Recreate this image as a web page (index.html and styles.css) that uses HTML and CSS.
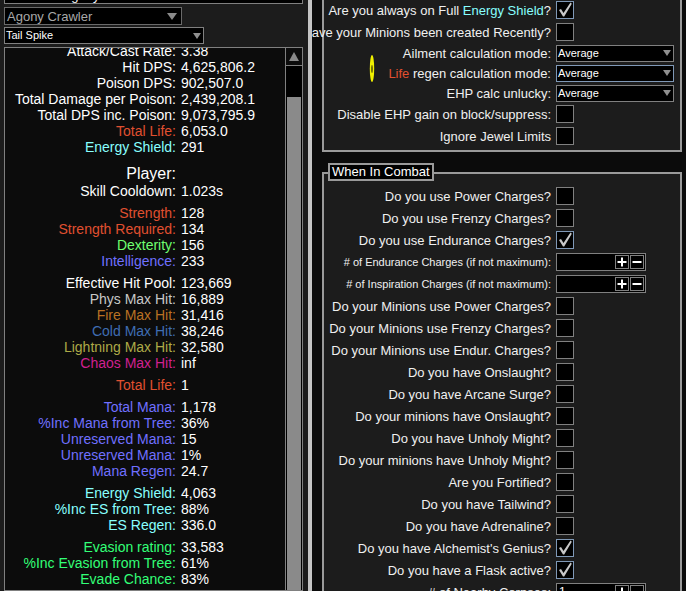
FILE: index.html
```html
<!DOCTYPE html>
<html>
<head>
<meta charset="utf-8">
<link rel="stylesheet" href="styles.css">
</head>
<body>
<div class="app">
  <aside class="left">
    <div class="dd dd-wide"><span class="dd-text">Herald of Agony</span><span class="arrow"></span></div>
    <div class="dd dd-minion"><span class="dd-text">Agony Crawler</span><span class="arrow"></span></div>
    <div class="dd dd-skill"><span class="dd-text small">Tail Spike</span><span class="arrow"></span></div>
    <div class="statbox">
      <div class="stats">
        <div class="stats-inner">
          <div class="stat"><span class="lbl">Attack/Cast Rate:</span><span class="val">3.38</span></div>
          <div class="stat"><span class="lbl">Hit DPS:</span><span class="val">4,625,806.2</span></div>
          <div class="stat"><span class="lbl">Poison DPS:</span><span class="val">902,507.0</span></div>
          <div class="stat"><span class="lbl">Total Damage per Poison:</span><span class="val">2,439,208.1</span></div>
          <div class="stat"><span class="lbl">Total DPS inc. Poison:</span><span class="val">9,073,795.9</span></div>
          <div class="stat"><span class="lbl c-life">Total Life:</span><span class="val">6,053.0</span></div>
          <div class="stat"><span class="lbl c-es">Energy Shield:</span><span class="val">291</span></div>

          <div class="stat head"><span class="lbl">Player:</span><span class="val"></span></div>
          <div class="stat"><span class="lbl">Skill Cooldown:</span><span class="val">1.023s</span></div>

          <div class="stat gap"><span class="lbl c-str">Strength:</span><span class="val">128</span></div>
          <div class="stat"><span class="lbl c-str">Strength Required:</span><span class="val">134</span></div>
          <div class="stat"><span class="lbl c-dex">Dexterity:</span><span class="val">156</span></div>
          <div class="stat"><span class="lbl c-int">Intelligence:</span><span class="val">233</span></div>

          <div class="stat gap"><span class="lbl">Effective Hit Pool:</span><span class="val">123,669</span></div>
          <div class="stat"><span class="lbl c-phys">Phys Max Hit:</span><span class="val">16,889</span></div>
          <div class="stat"><span class="lbl c-fire">Fire Max Hit:</span><span class="val">31,416</span></div>
          <div class="stat"><span class="lbl c-cold">Cold Max Hit:</span><span class="val">38,246</span></div>
          <div class="stat"><span class="lbl c-light">Lightning Max Hit:</span><span class="val">32,580</span></div>
          <div class="stat"><span class="lbl c-chaos">Chaos Max Hit:</span><span class="val">inf</span></div>

          <div class="stat gap"><span class="lbl c-life">Total Life:</span><span class="val">1</span></div>

          <div class="stat gap"><span class="lbl c-mana">Total Mana:</span><span class="val">1,178</span></div>
          <div class="stat"><span class="lbl c-mana">%Inc Mana from Tree:</span><span class="val">36%</span></div>
          <div class="stat"><span class="lbl c-mana">Unreserved Mana:</span><span class="val">15</span></div>
          <div class="stat"><span class="lbl c-mana">Unreserved Mana:</span><span class="val">1%</span></div>
          <div class="stat"><span class="lbl c-mana">Mana Regen:</span><span class="val">24.7</span></div>

          <div class="stat gap"><span class="lbl c-es">Energy Shield:</span><span class="val">4,063</span></div>
          <div class="stat"><span class="lbl c-es">%Inc ES from Tree:</span><span class="val">88%</span></div>
          <div class="stat"><span class="lbl c-es">ES Regen:</span><span class="val">336.0</span></div>

          <div class="stat gap"><span class="lbl c-eva">Evasion rating:</span><span class="val">33,583</span></div>
          <div class="stat"><span class="lbl c-eva">%Inc Evasion from Tree:</span><span class="val">61%</span></div>
          <div class="stat"><span class="lbl c-eva">Evade Chance:</span><span class="val">83%</span></div>
        </div>
      </div>
      <div class="scrollbar">
        <div class="sb-up"><span class="tri-up"></span></div>
        <div class="sb-track"><div class="sb-thumb"></div></div>
      </div>
    </div>
  </aside>

  <div class="splitter"></div>

  <main class="right">
    <div class="scroll">
      <section class="box box-top">
        <div class="row"><div class="label"><span>Are you always on Full <span class="c-es">Energy Shield</span>?</span></div><div class="cb on"><svg viewBox="0 0 16 16" width="16" height="16"><polygon points="2,8 4,7 6.5,11 13.5,0.5 14.8,1.8 7.2,14.5 6,14.5" fill="#c8c8c8"/></svg></div></div>
        <div class="row"><div class="label"><span>Have your Minions been created Recently?</span></div><div class="cb"></div></div>
        <div class="row ddrow"><div class="label"><span>Ailment calculation mode:</span></div><div class="dd dd-mode"><span class="dd-text small">Average</span><span class="arrow"></span></div></div>
        <div class="row ddrow"><div class="label"><span><span class="c-life">Life</span> regen calculation mode:</span></div><div class="dd dd-mode hover"><span class="dd-text small">Average</span><span class="arrow"></span></div></div>
        <div class="row ddrow"><div class="label"><span>EHP calc unlucky:</span></div><div class="dd dd-mode"><span class="dd-text small">Average</span><span class="arrow"></span></div></div>
        <div class="row"><div class="label"><span>Disable EHP gain on block/suppress:</span></div><div class="cb"></div></div>
        <div class="row"><div class="label"><span>Ignore Jewel Limits</span></div><div class="cb"></div></div>
      </section>

      <section class="box box-combat">
        <div class="legend">When In Combat</div>
        <div class="row"><div class="label"><span>Do you use Power Charges?</span></div><div class="cb"></div></div>
        <div class="row"><div class="label"><span>Do you use Frenzy Charges?</span></div><div class="cb"></div></div>
        <div class="row"><div class="label"><span>Do you use Endurance Charges?</span></div><div class="cb on"><svg viewBox="0 0 16 16" width="16" height="16"><polygon points="2,8 4,7 6.5,11 13.5,0.5 14.8,1.8 7.2,14.5 6,14.5" fill="#c8c8c8"/></svg></div></div>
        <div class="row"><div class="label small"><span># of Endurance Charges (if not maximum):</span></div><div class="num"><span class="num-text"></span><span class="btn"><svg viewBox="0 0 12 12" width="12" height="12"><rect x="1.5" y="5" width="9" height="2" fill="#fff"/><rect x="5" y="1.5" width="2" height="9" fill="#fff"/></svg></span><span class="btn"><svg viewBox="0 0 12 12" width="12" height="12"><rect x="1.5" y="5" width="9" height="2" fill="#fff"/></svg></span></div></div>
        <div class="row"><div class="label small"><span># of Inspiration Charges (if not maximum):</span></div><div class="num"><span class="num-text"></span><span class="btn"><svg viewBox="0 0 12 12" width="12" height="12"><rect x="1.5" y="5" width="9" height="2" fill="#fff"/><rect x="5" y="1.5" width="2" height="9" fill="#fff"/></svg></span><span class="btn"><svg viewBox="0 0 12 12" width="12" height="12"><rect x="1.5" y="5" width="9" height="2" fill="#fff"/></svg></span></div></div>
        <div class="row"><div class="label"><span>Do your Minions use Power Charges?</span></div><div class="cb"></div></div>
        <div class="row"><div class="label"><span>Do your Minions use Frenzy Charges?</span></div><div class="cb"></div></div>
        <div class="row"><div class="label"><span>Do your Minions use Endur. Charges?</span></div><div class="cb"></div></div>
        <div class="row"><div class="label"><span>Do you have Onslaught?</span></div><div class="cb"></div></div>
        <div class="row"><div class="label"><span>Do you have Arcane Surge?</span></div><div class="cb"></div></div>
        <div class="row"><div class="label"><span>Do your minions have Onslaught?</span></div><div class="cb"></div></div>
        <div class="row"><div class="label"><span>Do you have Unholy Might?</span></div><div class="cb"></div></div>
        <div class="row"><div class="label"><span>Do your minions have Unholy Might?</span></div><div class="cb"></div></div>
        <div class="row"><div class="label"><span>Are you Fortified?</span></div><div class="cb"></div></div>
        <div class="row"><div class="label"><span>Do you have Tailwind?</span></div><div class="cb"></div></div>
        <div class="row"><div class="label"><span>Do you have Adrenaline?</span></div><div class="cb"></div></div>
        <div class="row"><div class="label"><span>Do you have Alchemist's Genius?</span></div><div class="cb on"><svg viewBox="0 0 16 16" width="16" height="16"><polygon points="2,8 4,7 6.5,11 13.5,0.5 14.8,1.8 7.2,14.5 6,14.5" fill="#c8c8c8"/></svg></div></div>
        <div class="row"><div class="label"><span>Do you have a Flask active?</span></div><div class="cb on"><svg viewBox="0 0 16 16" width="16" height="16"><polygon points="2,8 4,7 6.5,11 13.5,0.5 14.8,1.8 7.2,14.5 6,14.5" fill="#c8c8c8"/></svg></div></div>
        <div class="row"><div class="label"><span># of Nearby Corpses:</span></div><div class="num"><span class="num-text">1</span><span class="btn"><svg viewBox="0 0 12 12" width="12" height="12"><rect x="1.5" y="5" width="9" height="2" fill="#fff"/><rect x="5" y="1.5" width="2" height="9" fill="#fff"/></svg></span><span class="btn"><svg viewBox="0 0 12 12" width="12" height="12"><rect x="1.5" y="5" width="9" height="2" fill="#fff"/></svg></span></div></div>
      </section>
    </div>
    <svg class="cursor" viewBox="0 0 6 29" width="6" height="29"><ellipse cx="3" cy="14.5" rx="2.2" ry="13.5" fill="#f0f000"/><ellipse cx="3" cy="15" rx="0.7" ry="4" fill="#3a3a00"/></svg>
  </main>
</div>
</body>
</html>
```

FILE: styles.css
```css
html, body {
  margin: 0;
  padding: 0;
  background: #0b0b0b;
  font-family: "Liberation Sans", Arial, sans-serif;
  color: #ffffff;
}

.app {
  display: flex;
  width: 686px;
  height: 591px;
  overflow: hidden;
}

/* ---------- left panel ---------- */
.left {
  width: 308px;
  flex: none;
  box-sizing: border-box;
  padding: 0 5px 0 4px;
  background: #1c1c1c;
  display: flex;
  flex-direction: column;
  height: 591px;
}

.dd {
  box-sizing: border-box;
  display: flex;
  align-items: center;
  justify-content: space-between;
  background: #000;
  border: 1px solid #808080;
  white-space: nowrap;
  overflow: hidden;
}

.dd-text {
  padding-left: 2px;
  font-size: 13px;
  line-height: 15px;
  color: #fff;
}

.dd-text.small {
  font-size: 11px;
  padding-left: 1px;
}

.arrow {
  width: 0;
  height: 0;
  border-left: 4px solid transparent;
  border-right: 4px solid transparent;
  border-top: 6px solid #909090;
  margin-right: 2px;
}

.dd-wide {
  width: 299px;
  height: 17px;
  margin-top: -13px;
  flex: none;
}

.dd-minion {
  width: 178px;
  height: 18px;
  margin-top: 3px;
  border-color: #6a6a6a;
  flex: none;
}

.dd-minion .dd-text {
  color: #a8a8a8;
}

.dd-minion .arrow {
  border-left-width: 5px;
  border-right-width: 5px;
  border-top-width: 7px;
  margin-right: 4px;
  border-top-color: #8a8a8a;
}

.dd-skill {
  width: 200px;
  height: 17px;
  margin-top: 2px;
  flex: none;
}

.dd-skill .arrow {
  margin-right: 2px;
}

.statbox {
  margin-top: 3px;
  flex: 1;
  display: flex;
  border: 1px solid #808080;
  background: #0c0c0c;
  min-height: 0;
}

.stats {
  flex: 1;
  overflow: hidden;
}

.stats-inner {
  margin-top: -5px;
  font-size: 14px;
}

.stat {
  display: flex;
  height: 16px;
  line-height: 16px;
  white-space: nowrap;
}

.stat .lbl {
  width: 171px;
  flex: none;
  text-align: right;
  color: #ffffff;
}

.stat .val {
  margin-left: 5px;
  color: #ffffff;
}

.stat.gap {
  margin-top: 6px;
}

.stat.head {
  margin-top: 10px;
  height: 18px;
  line-height: 18px;
  font-size: 16px;
}

.c-life { color: #e05030 !important; }
.c-es { color: #88ffff !important; }
.c-str { color: #e05030 !important; }
.c-dex { color: #70ff70 !important; }
.c-int { color: #7070ff !important; }
.c-phys { color: #c8c8c8 !important; }
.c-fire { color: #b97123 !important; }
.c-cold { color: #3f6db3 !important; }
.c-light { color: #adaa47 !important; }
.c-chaos { color: #d02090 !important; }
.c-mana { color: #7070ff !important; }
.c-eva { color: #33ff77 !important; }

.scrollbar {
  width: 17px;
  flex: none;
  box-sizing: border-box;
  border-left: 1px solid #808080;
  display: flex;
  flex-direction: column;
  background: #000;
}

.sb-up {
  height: 18px;
  box-sizing: border-box;
  border-bottom: 1px solid #808080;
  display: flex;
  align-items: center;
  justify-content: center;
  background: #0c0c0c;
}

.tri-up {
  width: 0;
  height: 0;
  border-left: 5px solid transparent;
  border-right: 5px solid transparent;
  border-bottom: 9px solid #8a8a8a;
}

.sb-track {
  flex: 1;
  padding: 31px 1px 0 1px;
}

.sb-thumb {
  height: 100%;
  background: #8a8a8a;
}

/* ---------- splitter ---------- */
.splitter {
  width: 4px;
  flex: none;
  background: #c4c4c4;
}

/* ---------- right panel ---------- */
.right {
  flex: 1;
  position: relative;
  overflow: hidden;
  background: #0b0b0b;
  padding: 0 4px 0 10px;
}

.scroll {
  margin-top: -12px;
}

.box {
  position: relative;
  width: 360px;
  box-sizing: border-box;
  border: 2px solid #9a9a9a;
  background: #1c1c1c;
}

.box-top {
  padding: 9px 0 3px 0;
}

.box-combat {
  margin-top: 20px;
  padding: 11px 0 3px 0;
}

.legend {
  position: absolute;
  left: 4px;
  top: -11px;
  height: 18px;
  box-sizing: border-box;
  border: 2px solid #9a9a9a;
  background: #000;
  padding: 0 2px;
  font-size: 13px;
  line-height: 14px;
  white-space: nowrap;
}

.row {
  display: grid;
  grid-template-columns: 227px auto;
  column-gap: 5px;
  align-items: center;
  justify-items: start;
  height: 22px;
}

.row.ddrow {
  height: 20px;
}

.label {
  width: 227px;
  display: flex;
  justify-content: flex-end;
  white-space: nowrap;
  font-size: 13px;
  color: #f0f0f0;
}

.label.small {
  font-size: 11px;
}

.cb {
  width: 18px;
  height: 18px;
  box-sizing: border-box;
  border: 1px solid #808080;
  background: #000;
  display: flex;
}

.cb.on {
  border-color: #7f98b6;
}

.dd-mode {
  width: 118px;
  height: 17px;
}

.dd-mode.hover {
  border-color: #7f98b6;
}

.num {
  width: 90px;
  height: 18px;
  box-sizing: border-box;
  border: 1px solid #808080;
  background: #000;
  display: flex;
  align-items: center;
  gap: 1px;
  padding-right: 1px;
}

.num-text {
  flex: 1;
  padding-left: 2px;
  font-size: 12px;
  line-height: 14px;
  color: #fff;
}

.btn {
  width: 14px;
  height: 14px;
  box-sizing: border-box;
  border: 1px solid #808080;
  background: #000;
  display: flex;
}

.cursor {
  position: absolute;
  left: 57px;
  top: 54px;
}
```
